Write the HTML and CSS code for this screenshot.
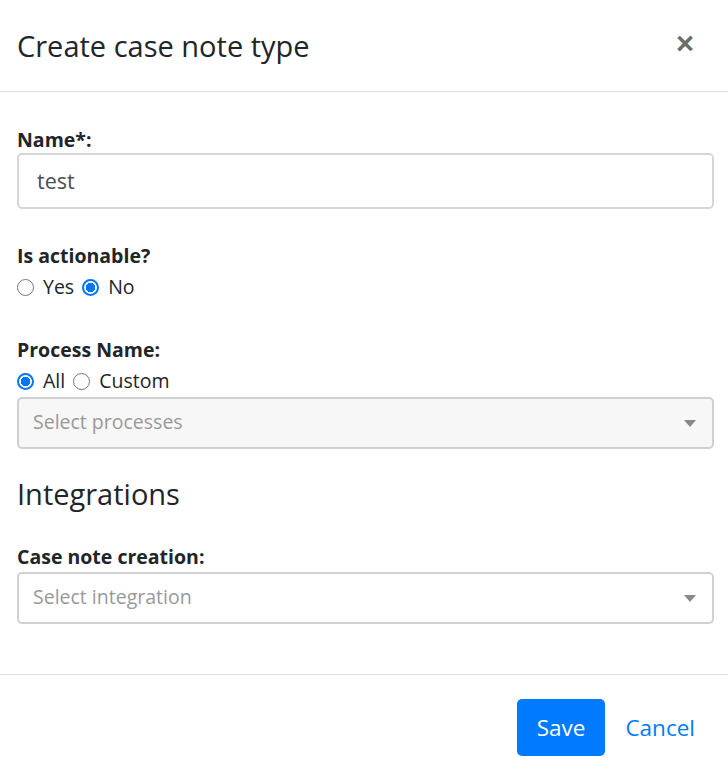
FILE: index.html
```html
<!DOCTYPE html>
<html lang="en">
<head>
<meta charset="utf-8">
<title>Create case note type</title>
<link rel="stylesheet" href="styles.css">
</head>
<body>
<div class="modal">
  <header class="modal-header">
    <h5 class="modal-title">Create case note type</h5>
    <button class="close" type="button" aria-label="Close">&times;</button>
  </header>
  <main class="modal-body">
    <div class="group group-name">
      <label class="label" for="name">Name*:</label>
      <input class="input" id="name" type="text" value="test">
    </div>
    <div class="group group-actionable">
      <div class="label">Is actionable?</div>
      <div class="radios">
        <label class="radio"><input type="radio" name="act"><span>Yes</span></label>
        <label class="radio"><input type="radio" name="act" checked><span>No</span></label>
      </div>
    </div>
    <div class="group group-process">
      <div class="label">Process Name:</div>
      <div class="radios">
        <label class="radio"><input type="radio" name="proc" checked><span>All</span></label>
        <label class="radio"><input type="radio" name="proc"><span>Custom</span></label>
      </div>
      <div class="select select-disabled">
        <span class="placeholder">Select processes</span>
        <span class="arrow"></span>
      </div>
    </div>
    <h4 class="section-title">Integrations</h4>
    <div class="group group-integration">
      <div class="label">Case note creation:</div>
      <div class="select">
        <span class="placeholder">Select integration</span>
        <span class="arrow"></span>
      </div>
    </div>
  </main>
  <footer class="modal-footer">
    <button class="btn-primary" type="button">Save</button>
    <a class="btn-link" href="#">Cancel</a>
  </footer>
</div>
</body>
</html>
```
FILE: styles.css
```css
* { box-sizing: border-box; }
html, body {
  margin: 0;
  padding: 0;
  background: #fff;
}
body {
  font-family: "Open Sans", "Noto Sans", sans-serif;
  color: #212529;
  font-size: 20px;
}
.modal {
  width: 728px;
  height: 773px;
  overflow: hidden;
  background: #fff;
}
.modal-header {
  display: flex;
  align-items: center;
  justify-content: space-between;
  height: 92px;
  padding: 0 34px 0 17px;
  border-bottom: 1px solid #dee2e6;
}
.modal-title {
  margin: 0;
  font-size: 29px;
  font-weight: 500;
  line-height: 36px;
  color: #212529;
}
.close {
  border: 0;
  background: transparent;
  padding: 0;
  font-family: "Liberation Sans", Arial, sans-serif;
  font-size: 31px;
  font-weight: 700;
  line-height: 1;
  color: #6c6c6c;
  margin-top: -4px;
}
.modal-body {
  padding: 36px 14px 0 17px;
  height: 582px;
}
.label {
  display: block;
  font-weight: 700;
  font-size: 19.5px;
  line-height: 24px;
}
.group-name .label { margin-bottom: 1px; }
.input {
  display: block;
  width: 100%;
  height: 56px;
  border: 2px solid #d5d6d8;
  border-radius: 5px;
  padding: 0 18px 2px;
  font-family: inherit;
  font-size: 21.5px;
  color: #495057;
  background: #fff;
  outline: none;
}
.group-actionable { margin-top: 35px; }
.radios {
  display: flex;
  align-items: center;
  height: 24px;
  margin-top: 7px;
}
.radio {
  display: flex;
  align-items: center;
  margin-right: 8px;
  font-size: 19.5px;
  line-height: 24px;
}
.radio input {
  appearance: none;
  -webkit-appearance: none;
  width: 17px;
  height: 17px;
  margin: 0 9px 0 0;
  border: 1px solid #767676;
  border-radius: 50%;
  background: #fff;
}
.radio input:checked {
  border: 2px solid #0075ff;
  background: radial-gradient(circle, #0075ff 0 4.5px, #fff 5px);
}
.group-process { margin-top: 39px; }
.select {
  position: relative;
  display: flex;
  align-items: center;
  height: 52px;
  border: 2px solid #d0d0d0;
  border-radius: 5px;
  padding: 0 14px 3px;
  background: #fff;
}
.group-process .select { margin-top: 4px; }
.select-disabled { background: #f7f7f7; }
.placeholder {
  color: #999;
  font-size: 19.5px;
}
.arrow {
  position: absolute;
  right: 16px;
  top: 21px;
  width: 0;
  height: 0;
  border-left: 6px solid transparent;
  border-right: 6px solid transparent;
  border-top: 7px solid #888;
}
.section-title {
  margin: 28px 0 0;
  font-size: 29px;
  font-weight: 500;
  line-height: 34px;
}
.group-integration { margin-top: 34px; }
.group-integration .select { margin-top: 3px; }
.modal-footer {
  display: flex;
  align-items: center;
  justify-content: flex-end;
  height: 99px;
  padding: 0 18px 0 0;
  border-top: 1px solid #dee2e6;
  gap: 5px;
}
.btn-primary {
  height: 57px;
  padding: 0 20px;
  border: 0;
  border-radius: 5px;
  background: #007bff;
  color: #fff;
  font-family: inherit;
  font-size: 22.5px;
  margin-top: 7px;
}
.btn-link {
  padding: 0 15px;
  color: #007bff;
  text-decoration: none;
  font-size: 22.5px;
  line-height: 57px;
  margin-top: 7px;
}
```
